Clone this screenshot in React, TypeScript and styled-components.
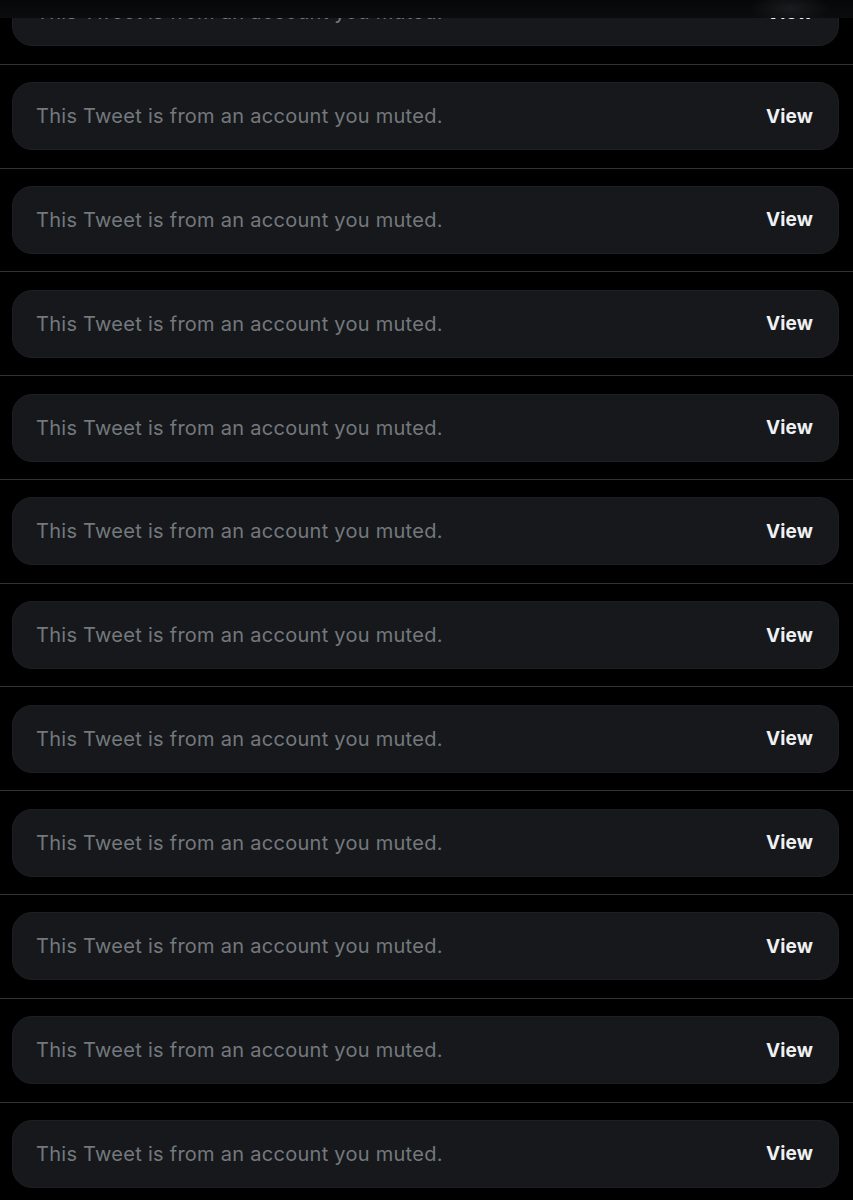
import React from "react";
import styled, { createGlobalStyle } from "styled-components";

const Global = createGlobalStyle`
  html, body {
    margin: 0;
    padding: 0;
    background: #000000;
  }
  body {
    font-family: Inter, "Noto Sans", "Liberation Sans", sans-serif;
    -webkit-font-smoothing: antialiased;
  }
`;

const Page = styled.div`
  height: 1200px;
  overflow: hidden;
  background: #000000;
  position: relative;
`;

const TopBar = styled.div`
  position: absolute;
  top: 0;
  left: 0;
  right: 0;
  height: 18px;
  background:
    radial-gradient(ellipse 40px 16px at 790px 8px, rgba(60, 62, 66, 0.35), rgba(0, 0, 0, 0) 100%),
    linear-gradient(180deg, #060708 0%, #0b0c0e 100%);
  z-index: 5;
`;

const Feed = styled.div`
  display: flex;
  flex-direction: column;
  margin-top: -40px;
`;

const Row = styled.div`
  border-top: 1px solid #2f3336;
  padding: 17.4px 14px 17.4px 12px;
`;

const MutedCard = styled.div`
  height: 68px;
  box-sizing: border-box;
  display: flex;
  align-items: center;
  justify-content: space-between;
  padding: 0 25px 0 23px;
  background: #16181c;
  border: 1px solid #1d1f23;
  border-radius: 20px;
`;

const Notice = styled.span`
  color: #74787d;
  font-size: 20px;
  letter-spacing: 0.27px;
`;

const ViewButton = styled.span`
  color: #eff1f2;
  font-size: 19px;
  font-weight: 700;
  letter-spacing: 0.1px;
`;

export default function App() {
  const rows = Array.from({ length: 12 });
  return (
    <Page>
      <Global />
      <TopBar />
      <Feed>
        {rows.map((_, i) => (
          <Row key={i}>
            <MutedCard>
              <Notice>This Tweet is from an account you muted.</Notice>
              <ViewButton>View</ViewButton>
            </MutedCard>
          </Row>
        ))}
      </Feed>
    </Page>
  );
}
